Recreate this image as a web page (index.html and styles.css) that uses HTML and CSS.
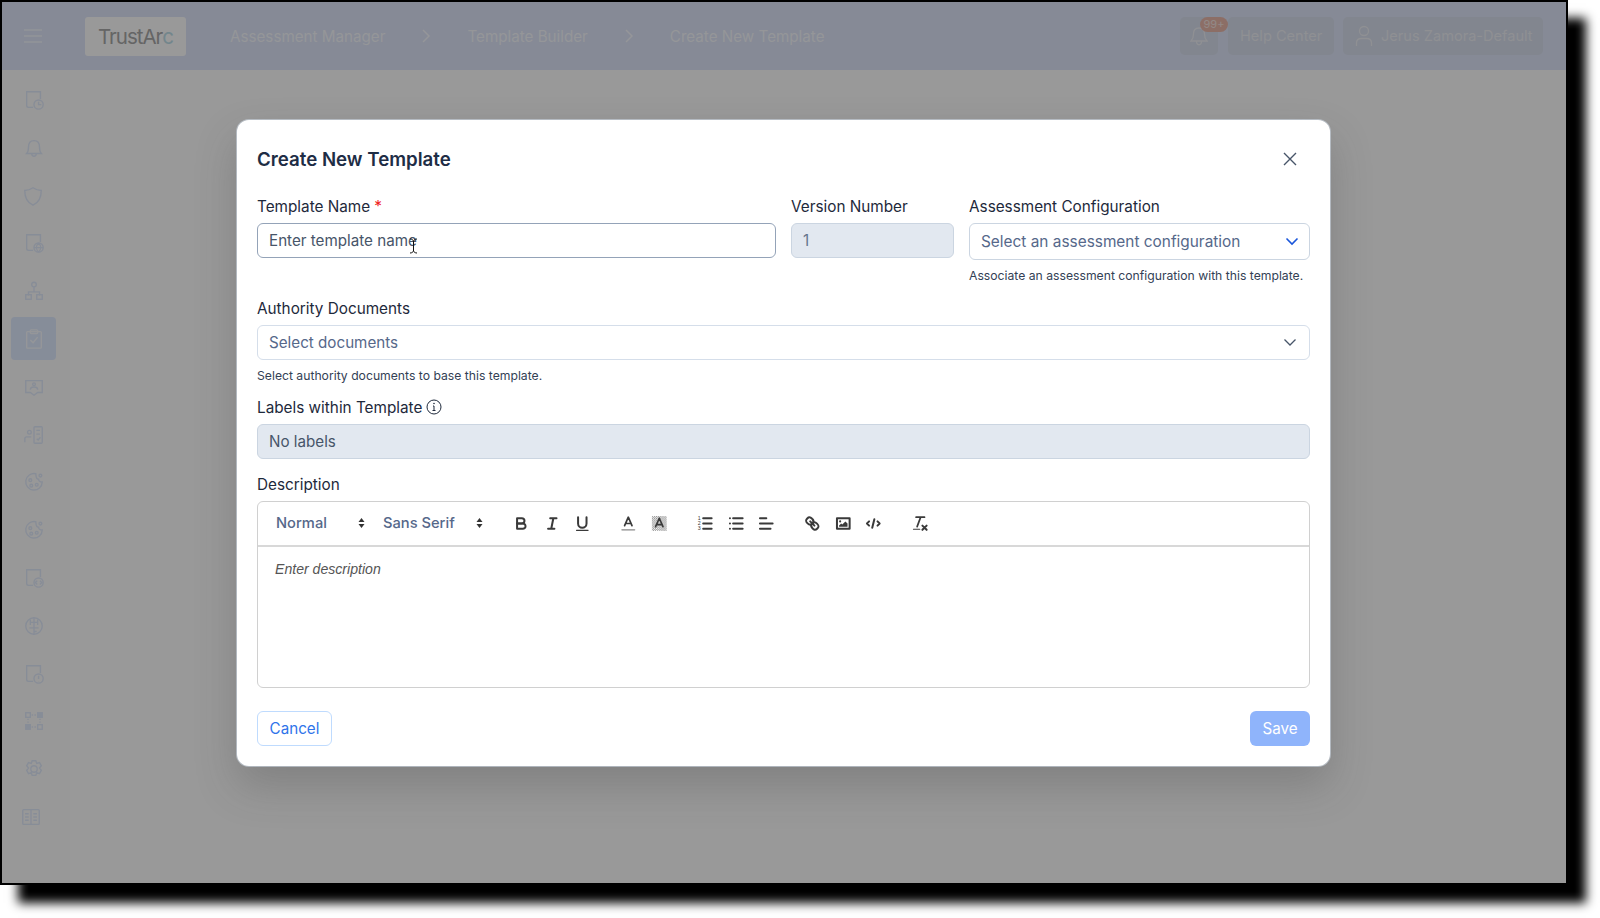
FILE: index.html
```html
<!DOCTYPE html>
<html lang="en">
<head>
  <meta charset="UTF-8">
  <title>Create New Template</title>
  <link rel="stylesheet" href="styles.css">
</head>
<body>

<div class="window">

  <header class="topbar">
    <svg class="burger" width="18" height="14" viewBox="0 0 18 14"><path d="M0 1h18M0 7h18M0 13h18"/></svg>
    <div class="logo">TrustAr<span>c</span></div>
    <nav class="crumbs">
      <span>Assessment Manager</span>
      <svg width="10" height="16" viewBox="0 0 10 16"><path d="M2 2l6 6-6 6"/></svg>
      <span>Template Builder</span>
      <svg width="10" height="16" viewBox="0 0 10 16"><path d="M2 2l6 6-6 6"/></svg>
      <span>Create New Template</span>
    </nav>
    <div class="top-right">
      <div class="top-btn bell-btn">
        <svg width="18" height="24" viewBox="0 0 18 24"><path d="M1 17c2-2 2.500-3 2.500-7 0-3.500 2-6 5.500-6s5.500 2.500 5.500 6c0 4 .5 5 2.500 7zM6.500 17c0 5 5 5 5 0"/></svg>
        <span class="badge">99+</span>
      </div>
      <div class="top-btn help-btn">Help Center</div>
      <div class="top-btn user-btn">
        <svg width="18" height="22" viewBox="0 0 18 22"><circle cx="9" cy="6" r="4.500"/><path d="M1.500 21v-3c0-3 2-4.500 5-4.500h5c3 0 5 1.500 5 4.500v3"/></svg>
        <span>Jerus Zamora-Default</span>
      </div>
    </div>
  </header>

  <aside class="sidebar">
    <div class="side-item">
      <svg viewBox="0 0 24 24"><path d="M11 20H6a2 2 0 0 1-2-2V3h15v8"/><circle cx="17" cy="17" r="5"/><path d="M17 14v3h3"/></svg>
    </div>
    <div class="side-item">
      <svg viewBox="0 0 24 24"><path d="M4 18c2-2 2-3 2-7 0-4 2-7 6-7s6 3 6 7c0 4 0 5 2 7zM9.500 18c0 4 5 4 5 0"/></svg>
    </div>
    <div class="side-item">
      <svg class="nudge" viewBox="0 0 24 24"><path d="M12 3c3 2 6 3 9 3 0 8-2 13-9 16C5 19 3 14 3 6c3 0 6-1 9-3z"/></svg>
    </div>
    <div class="side-item">
      <svg viewBox="0 0 24 24"><path d="M11 20H6a2 2 0 0 1-2-2V3h15v8"/><circle cx="17" cy="17" r="5"/><path d="M12 17h10M17 12c-3 3-3 7 0 10M17 12c3 3 3 7 0 10"/></svg>
    </div>
    <div class="side-item">
      <svg viewBox="0 0 24 24"><circle cx="12" cy="5" r="2.500"/><path d="M12 7.500V13M6 17v-4h12v4"/><rect x="3" y="16" width="6" height="5"/><rect x="15" y="16" width="6" height="5"/></svg>
    </div>
    <div class="side-item active">
      <svg viewBox="0 0 24 24"><rect x="4" y="4" width="16" height="18" rx="1"/><rect x="8" y="2" width="8" height="4" rx="1"/><path d="M8 13l3 3 5-6"/></svg>
    </div>
    <div class="side-item">
      <svg viewBox="0 0 24 24"><path d="M8 18H3V5h18v13h-5l-4 3z"/><circle cx="12" cy="9" r="1.500"/><path d="M8 15c0-2 2-3 4-3s4 1 4 3"/></svg>
    </div>
    <div class="side-item">
      <svg viewBox="0 0 24 24"><rect x="12" y="3" width="9" height="18" rx="1"/><circle cx="7" cy="9" r="2"/><path d="M2 20v-4c0-1 1-2 2-2h5M14.500 7h4M14.500 11h4M15 16l1.500 1.500 2.500-3"/></svg>
    </div>
    <div class="side-item">
      <svg viewBox="0 0 24 24"><path d="M14 3a9 9 0 1 0 7 9c-3 0-4-2-4-3-2 0-3-3-3-6z"/><circle cx="19" cy="5" r="1.500"/><circle cx="8" cy="10" r="1.500"/><circle cx="9" cy="16" r="1.500"/><circle cx="15" cy="15" r="1.500"/></svg>
    </div>
    <div class="side-item">
      <svg viewBox="0 0 24 24"><path d="M14 3a9 9 0 1 0 7 9c-3 0-4-2-4-3-2 0-3-3-3-6z"/><circle cx="19" cy="5" r="1.500"/><circle cx="8" cy="10" r="1.500"/><circle cx="9" cy="16" r="1.500"/><circle cx="15" cy="15" r="1.500"/></svg>
    </div>
    <div class="side-item">
      <svg viewBox="0 0 24 24"><path d="M11 20H6a2 2 0 0 1-2-2V3h15v8"/><circle cx="17" cy="17" r="5"/><path d="M15.500 15l-2 2 2 2M18.500 15l2 2-2 2"/></svg>
    </div>
    <div class="side-item">
      <svg viewBox="0 0 24 24"><circle cx="12" cy="12" r="9"/><path d="M12 3v18M12 8H8M8 5v6M12 14H7M12 8h4M16 5v6M12 14h5M12 18h3"/></svg>
    </div>
    <div class="side-item">
      <svg viewBox="0 0 24 24"><path d="M11 20H6a2 2 0 0 1-2-2V3h15v8"/><circle cx="17" cy="17" r="5"/><path d="M17 14v3.500M17 19.500v.5"/></svg>
    </div>
    <div class="side-item">
      <svg viewBox="0 0 24 24"><rect x="3" y="3" width="5" height="5"/><rect class="solid" x="16" y="3" width="5" height="5"/><rect class="solid" x="3" y="16" width="5" height="5"/><rect x="16" y="16" width="5" height="5"/><path d="M9.500 5.500h5M9.500 18.500h5M5.500 9.500v5M18.500 9.500v5" stroke-dasharray="1.500 1.500"/></svg>
    </div>
    <div class="side-item">
      <svg viewBox="0 0 24 24"><circle cx="12" cy="12" r="3.500"/><path d="M10 3h4l1 3 3-1 2 3.500-2 2.500 2 2.500-2 3.500-3-1-1 3h-4l-1-3-3 1-2-3.500 2-2.500-2-2.500L6 5l3 1z"/></svg>
    </div>
    <div class="side-item">
      <svg class="nudge-more" viewBox="0 0 24 24"><rect x="3" y="4" width="18" height="16" rx="1"/><path d="M12 4v16M5.500 8.500h4M5.500 12h4M5.500 15.500h4M14.500 8.500h4M14.500 12h4M14.500 15.500h4"/></svg>
    </div>
  </aside>

  <div class="overlay">
    <div class="modal">

      <div class="modal-head">
        <h2>Create New Template</h2>
        <svg class="close" width="14" height="14" viewBox="0 0 14 14"><path d="M1 1l12 12M13 1L1 13"/></svg>
      </div>

      <div class="top-row">
        <div>
          <label>Template Name <span class="req">*</span></label>
          <div class="input name-input">
            Enter template name
            <svg class="text-cursor" width="9" height="16" viewBox="0 0 9 16"><path d="M1 1c2 0 3 1 3.500 2 .5-1 1.500-2 3.500-2M4.500 3v10M1 15c2 0 3-1 3.500-2 .5 1 1.500 2 3.500 2"/></svg>
          </div>
        </div>
        <div>
          <label>Version Number</label>
          <div class="input disabled version">1</div>
        </div>
        <div>
          <label>Assessment Configuration</label>
          <div class="input select config">
            <span>Select an assessment configuration</span>
            <svg width="14" height="9" viewBox="0 0 14 9"><path d="M1.500 1.500L7 7l5.500-5.500"/></svg>
          </div>
          <p class="help">Associate an assessment configuration with this template.</p>
        </div>
      </div>

      <div class="field docs">
        <label>Authority Documents</label>
        <div class="input select light">
          <span>Select documents</span>
          <svg width="14" height="9" viewBox="0 0 14 9"><path d="M1.500 1.500L7 7l5.500-5.500"/></svg>
        </div>
        <p class="help">Select authority documents to base this template.</p>
      </div>

      <div class="field labels-field">
        <label>Labels within Template
          <svg class="info" width="16" height="16" viewBox="0 0 16 16"><circle cx="8" cy="8" r="7"/><path d="M8 7v4.500M6.500 11.500h3M7 7h1"/><circle class="dot" cx="8" cy="4.500" r=".8"/></svg>
        </label>
        <div class="input disabled no-labels">No labels</div>
      </div>

      <div class="field desc-field">
        <label>Description</label>
        <div class="editor">
          <div class="toolbar">
            <div class="picker picker-size">
              <span>Normal</span>
              <svg width="7" height="12" viewBox="0 0 7 12"><path d="M3.500 1L6.500 5H.5zM3.500 11L.5 7h6z"/></svg>
            </div>
            <div class="picker picker-font">
              <span>Sans Serif</span>
              <svg width="7" height="12" viewBox="0 0 7 12"><path d="M3.500 1L6.500 5H.5zM3.500 11L.5 7h6z"/></svg>
            </div>

            <div class="tool-group">
              <svg class="tool" viewBox="0 0 18 18"><path d="M5,4H9.500A2.500,2.500,0,0,1,12,6.500v0A2.500,2.500,0,0,1,9.500,9H5V4Z"/><path d="M5,9h5.500A2.500,2.500,0,0,1,13,11.500v0A2.500,2.500,0,0,1,10.500,14H5V9Z"/></svg>
              <svg class="tool" viewBox="0 0 18 18"><path d="M7 4h6M5 14h6M8 14l2-10"/></svg>
              <svg class="tool" viewBox="0 0 18 18"><path d="M5,3V9a4,4,0,0,0,4,4h0a4,4,0,0,0,4-4V3"/><rect class="fill" x="3" y="15" width="12" height="1" rx=".5"/></svg>
            </div>

            <div class="tool-group">
              <svg class="tool" viewBox="0 0 18 18"><path class="label-line" d="M3 15h12"/><path class="thin" d="M5.500 11L9 3l3.500 8M6.400 9h5.200"/></svg>
              <svg class="tool" viewBox="0 0 18 18">
                <defs><pattern id="hatch" width="2" height="2" patternUnits="userSpaceOnUse"><rect class="dither" width="1" height="1"/><rect class="dither" x="1" y="1" width="1" height="1"/></pattern></defs>
                <rect class="hatch-box" x="2" y="2" width="14" height="14"/>
                <path class="thin" d="M5.500 12L9 4l3.500 8M6.400 10h5.200"/>
              </svg>
            </div>

            <div class="tool-group">
              <svg class="tool" viewBox="0 0 18 18"><path d="M7 4h8M7 9h8M7 14h8"/><text x="1.800" y="5.600">1</text><text x="1.800" y="10.600">2</text><text x="1.800" y="15.600">3</text></svg>
              <svg class="tool" viewBox="0 0 18 18"><path d="M6 4h9M6 9h9M6 14h9M3 4h0M3 9h0M3 14h0"/></svg>
              <svg class="tool" viewBox="0 0 18 18"><path d="M3 9h12M3 14h10M3 4h6"/></svg>
            </div>

            <div class="tool-group">
              <svg class="tool" viewBox="0 0 18 18"><path d="M7 7l4 4"/><path d="M8.900,4.577a3.476,3.476,0,0,1,.36,4.679A3.476,3.476,0,0,1,4.577,8.900C3.185,7.500,2.035,6.400,4.217,4.217S7.500,3.185,8.900,4.577Z"/><path d="M13.423,9.100a3.476,3.476,0,0,0-4.679-.36,3.476,3.476,0,0,0,.36,4.679c1.392,1.392,2.500,2.542,4.679.36S14.815,10.500,13.423,9.100Z"/></svg>
              <svg class="tool" viewBox="0 0 18 18"><rect x="3" y="4" width="12" height="10"/><circle class="fill" cx="6" cy="7" r="1"/><path class="fill" d="M5 12v-1l2-2 1 1 3-3 2 2v3z"/></svg>
              <svg class="tool" viewBox="0 0 18 18"><path d="M5 7L3 9l2 2M13 7l2 2-2 2M10 5L8 13"/></svg>
            </div>

            <div class="tool-group">
              <svg class="tool" viewBox="0 0 18 18"><path class="thin" d="M5 3h8M6 12L9.350 3"/><path d="M11 11l4 4M15 11l-4 4"/><rect class="fill" x="2" y="14" width="7" height="1" rx=".5"/></svg>
            </div>
          </div>
          <div class="editor-body">Enter description</div>
        </div>
      </div>

      <div class="modal-foot">
        <button type="button" class="btn-cancel">Cancel</button>
        <button type="button" class="btn-save">Save</button>
      </div>

    </div>
  </div>
</div>

</body>
</html>
```

FILE: styles.css
```css
* {
  box-sizing: border-box;
}

body {
  margin: 0;
  background: white;
  font-family: Inter, "Noto Sans", sans-serif;
  height: 918px;
  overflow: hidden;
}

/* the captured browser window, sits on a hard black drop shadow */
.window {
  position: relative;
  width: 1568px;
  height: 885px;
  border: 2px solid #000;
  background: white;
  box-shadow: 18px 18px 10px #000;
  overflow: hidden;
}

.topbar {
  display: flex;
  align-items: center;
  height: 68px;
  padding: 0 23px 0 22px;
  background: #dfe6fa;
}

.burger {
  fill: none;
  stroke: #f4f7ff;
  stroke-width: 1.5;
  margin-right: 43px;
}

.logo {
  display: flex;
  align-items: center;
  justify-content: center;
  width: 101px;
  height: 39px;
  background: white;
  border-radius: 3px;
  color: #a8a8a8;
  font-size: 20.5px;
  letter-spacing: -1px;
}

.logo span {
  color: #bfe0ea;
}

.crumbs {
  display: flex;
  align-items: center;
  gap: 36px;
  margin-left: 44px;
  color: #f8faff;
  font-size: 15.2px;
}

.crumbs svg {
  fill: none;
  stroke: #f8faff;
  stroke-width: 1.5;
}

.top-right {
  display: flex;
  align-items: center;
  gap: 10px;
  margin-left: auto;
  color: #eef0f6;
  font-size: 14.6px;
  white-space: nowrap;
}

.top-btn {
  position: relative;
  display: flex;
  align-items: center;
  height: 38px;
  background: #d9dfee;
  border-radius: 5px;
}

.top-btn svg {
  fill: none;
  stroke: #eef0f6;
  stroke-width: 1.3;
}

.bell-btn {
  width: 38px;
  padding-left: 10px;
}

.badge {
  position: absolute;
  top: 0;
  left: 20px;
  width: 28px;
  height: 15px;
  border-radius: 8px;
  background: #eab8ab;
  color: #f4e4e0;
  font-size: 11px;
  line-height: 15px;
  text-align: center;
}

.help-btn {
  width: 106px;
  padding-left: 12px;
}

.user-btn {
  gap: 8px;
  width: 200px;
  padding-left: 12px;
  margin-left: -1px;
}

.sidebar {
  display: flex;
  flex-direction: column;
  gap: 4.8px;
  width: 68px;
  height: 813px;
  padding: 8.5px 0 0 9px;
  background: #fdfdfd;
}

.side-item {
  display: flex;
  align-items: center;
  justify-content: center;
  flex: none;
  width: 45px;
  height: 43px;
  border-radius: 4px;
}

.side-item svg {
  width: 22px;
  height: 22px;
  fill: none;
  stroke: #e2ebfc;
  stroke-width: 1.5;
}

.side-item .solid {
  fill: #e2ebfc;
}

.side-item svg.nudge {
  margin-left: -2px;
}

.side-item svg.nudge-more {
  margin-left: -6px;
}

.side-item.active {
  background: #e0ebff;
}

.side-item.active svg {
  stroke: #f8fbff;
}

/* dim layer + centered modal */
.overlay {
  position: absolute;
  inset: 0;
  display: flex;
  justify-content: center;
  align-items: flex-start;
  padding: 118px 1px 0 0;
  background: rgba(0, 0, 0, 0.4);
}

.modal {
  width: 1093px;
  height: 646px;
  padding: 20px;
  background: white;
  border-radius: 12px;
  box-shadow: 0 0 0 1px rgba(203, 213, 225, 0.6), 0 20px 40px rgba(60, 60, 60, 0.25);
  color: #1e293b;
}

.modal-head {
  display: flex;
  align-items: center;
  justify-content: space-between;
  height: 38px;
  margin-bottom: 16px;
}

.modal-head h2 {
  margin: 0;
  color: #1e2d45;
  font-size: 18.7px;
  font-weight: 600;
}

.close {
  fill: none;
  stroke: #475569;
  stroke-width: 1.4;
  margin-right: 13px;
}

label {
  display: flex;
  align-items: center;
  gap: 4px;
  height: 24px;
  margin-bottom: 5px;
  font-size: 15.3px;
}

.req {
  color: #ef1c1c;
}

.info {
  fill: none;
  stroke: #1e293b;
  stroke-width: 1;
}

.info .dot {
  fill: #1e293b;
  stroke: none;
}

.top-row {
  display: grid;
  grid-template-columns: 519px 163px 1fr;
  gap: 15px;
}

.input {
  position: relative;
  display: flex;
  align-items: center;
  height: 35px;
  padding: 0 11px;
  border: 1px solid #cbd5e1;
  border-radius: 6px;
  background: white;
  color: #475569;
  font-size: 15.2px;
}

.name-input {
  border-color: #94a3b8;
}

.text-cursor {
  position: absolute;
  left: 151px;
  top: 14px;
  fill: none;
  stroke: #111;
  stroke-width: 1;
}

.disabled {
  background: #e2e8f0;
}

.version {
  color: #64748b;
}

.select {
  justify-content: space-between;
  color: #56688a;
}

.select svg {
  fill: none;
  stroke: #475569;
  stroke-width: 1.3;
  margin-right: 1px;
}

.config {
  height: 37px;
  font-size: 15.4px;
}

.config svg {
  stroke: #1a56db;
  stroke-width: 1.6;
  margin-right: -1px;
}

.light {
  border-color: #d5deea;
}

.help {
  margin: 7px 0 0;
  color: #334155;
  font-size: 12.2px;
  line-height: 18px;
}

.docs {
  margin-top: 11px;
}

.labels-field {
  margin-top: 10px;
}

.desc-field {
  margin-top: 13px;
}

.editor {
  height: 187px;
  border: 1px solid #d0d0d0;
  border-radius: 6px;
  font-family: "Liberation Sans", Arial, sans-serif;
}

.toolbar {
  display: flex;
  align-items: center;
  height: 44.5px;
  padding-left: 18px;
  border-bottom: 2px solid #d8d8d8;
}

.picker {
  display: flex;
  align-items: center;
  justify-content: space-between;
  height: 24px;
  color: #56688a;
  font-family: Inter, "Noto Sans", sans-serif;
  font-size: 14.7px;
  font-weight: 500;
}

.picker svg {
  fill: #333;
}

.picker-size {
  width: 89px;
  margin-right: 18px;
}

.picker-font {
  width: 100px;
  margin-right: 23px;
}

.tool-group {
  display: flex;
  margin-right: 15.5px;
}

.tool {
  width: 30.6px;
  height: 19px;
  fill: none;
  stroke: #3a3a3a;
  stroke-width: 1.9;
  stroke-linecap: round;
  stroke-linejoin: round;
}

.tool .fill {
  fill: #3a3a3a;
  stroke: none;
}

.tool .thin {
  stroke-width: 1.6;
}

.tool .label-line {
  stroke: #888;
  stroke-width: 1.3;
}

.tool .dither {
  fill: #888;
  stroke: none;
}

.tool .hatch-box {
  fill: url(#hatch);
  stroke: none;
}

.tool text {
  fill: #3a3a3a;
  stroke: none;
  font-family: "Liberation Sans", Arial, sans-serif;
  font-size: 5px;
}

.editor-body {
  padding: 14px 17px;
  color: #555;
  font-size: 14.1px;
  font-style: italic;
}

.modal-foot {
  display: flex;
  justify-content: space-between;
  margin-top: 23px;
}

.modal-foot button {
  height: 35px;
  border-radius: 6px;
  font-family: Inter, "Noto Sans", sans-serif;
  font-size: 15.2px;
}

.btn-cancel {
  width: 75px;
  background: white;
  border: 1px solid #bfdbfe;
  color: #2f74ea;
}

.btn-save {
  width: 60px;
  background: #8fb4fb;
  border: none;
  color: white;
}
```
